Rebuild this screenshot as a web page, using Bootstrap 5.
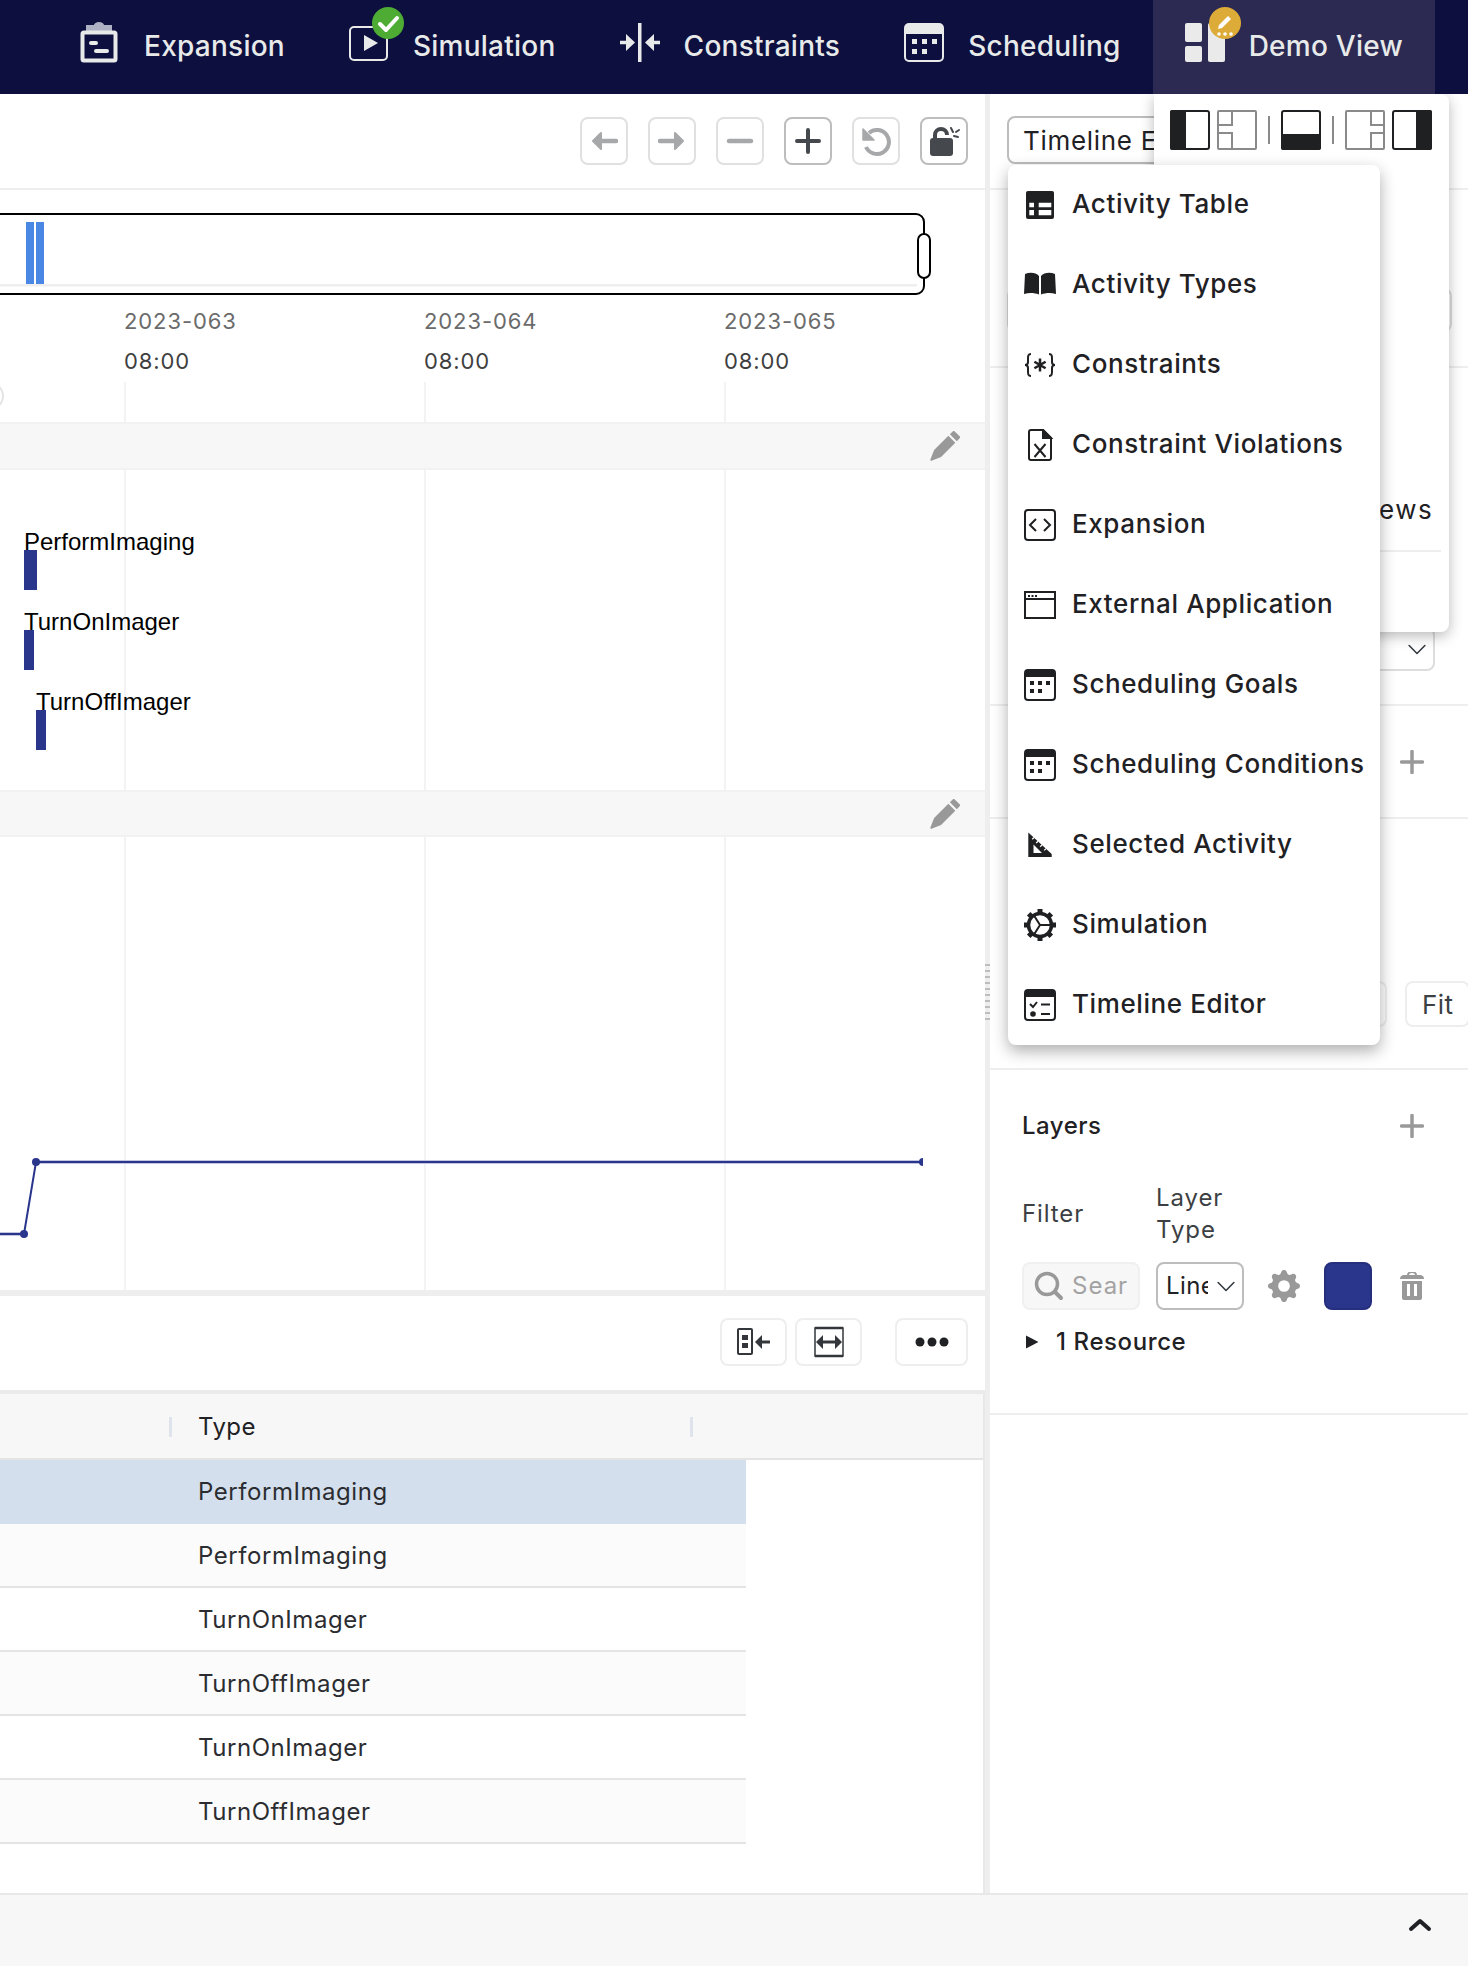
<!DOCTYPE html>
<html lang="en">
<head>
<meta charset="utf-8">
<title>Demo View</title>
<link rel="stylesheet" href="https://cdn.jsdelivr.net/npm/bootstrap@5.3.0/dist/css/bootstrap.min.css">
<style>
html,body{margin:0;height:1966px;overflow:hidden}
body{font-family:Inter,"Liberation Sans",sans-serif;font-size:26px;letter-spacing:.4px;color:#1f2124;display:flex;flex-direction:column;background:#fff}
svg{display:block;flex:none}
.app-nav{height:94px;background:#0d0f3f;padding:0 0 0 48px;flex:none;justify-content:flex-start;flex-wrap:nowrap}
.app-nav .nav-link{color:#e8eaea;font-size:28px;font-weight:500;letter-spacing:.25px;height:94px;padding:0 32px 2px 32px;display:flex;align-items:center;gap:24px}
.app-nav .nav-link svg{margin-bottom:6px}
.app-nav .nav-link.active,.app-nav .nav-link:hover{color:#e8eaea;background:#2c2a52}
.app-main{height:1799px;flex:none;position:relative;overflow:hidden}
.left-col{width:985px;flex:none;display:flex;flex-direction:column}
.splitter{width:5px;flex:none;background:#eee}
.grip{height:60px;margin-top:868px;background:radial-gradient(circle,#bdbdbd 1px,transparent 1.3px) 0 0/2.5px 6px}
.right-col{width:478px;flex:none;overflow:hidden}
.tool-row{height:96px;border-bottom:2px solid #eee;gap:20px;padding-right:17px}
.tool-btn{width:48px;height:48px;padding:0;border:2px solid #e0e0e0;border-radius:8px;background:#fff;display:flex;align-items:center;justify-content:center;flex:none}
.tool-btn.on{border-color:#bdbdbd}
.row-head{background:#f7f7f7;border-top:2px solid #f2f2f2;border-bottom:2px solid #f2f2f2;padding-right:25px;height:48px}
.row-head.second{height:47px}
.chart-axis{height:232px}
.chart-one{height:320px}
.chart-two{height:453px}
.chart-label{font-family:"Liberation Sans",Arial,sans-serif;font-size:24px;letter-spacing:0;fill:#000}
.chart-date{font-family:Inter,sans-serif;font-size:22px;letter-spacing:.9px;fill:#6b6b6b}
.chart-time{font-family:Inter,sans-serif;font-size:22px;letter-spacing:.9px;fill:#3f3f3f}
.thick{height:6px;background:#eee;flex:none}
.table-tools{height:98px;border-bottom:4px solid #ebebeb;padding:0 17px 2px 0;flex:none}
.table-btn{height:48px;padding:0;border:2px solid #eee;border-radius:8px;background:#fff;display:flex;align-items:center;justify-content:center}
.table-wrap{flex:1;border-right:2px solid #e8e8e8;overflow:hidden}
.grid-table{--bs-table-bg:transparent;width:983px;table-layout:fixed;margin:0;border-collapse:separate;border-spacing:0;font-size:24px;letter-spacing:.55px;color:#2b2d31}
.grid-table th{height:66px;background:#f7f7f7;font-weight:400;padding:2px 0 0 26px;vertical-align:middle;position:relative;border-bottom:2px solid #e4e4e4;border-top:0;color:#1f2124;letter-spacing:.4px}
.grid-table th.res::after{content:"";position:absolute;right:0;top:23px;height:20px;width:3px;background:#dfe3ec}
.grid-table td{height:64px;padding:2px 0 0 26px;vertical-align:middle;border-bottom:2px solid #e4e4e4}
.grid-table td.blank{border:0;background:#fff}
.grid-table tr.sel td:not(.blank){background:#d4dfed;border-bottom-color:#d4dfed}
.grid-table tr.alt td:not(.blank){background:#fbfbfb}
.sec{border-bottom:2px solid #eee}
.sec-a{height:96px;padding:0 0 2px 17px;display:flex;align-items:center}
.sec-b{height:178px;padding:98px 16px 0 17px}
.sec-c{height:338px;padding:259px 33px 0 32px}
.sec-d{height:113px;padding:0 44px 0 32px;display:flex;align-items:center;justify-content:flex-end}
.sec-e{height:251px;padding:162px 0 0 0;display:flex;justify-content:flex-end;gap:18px;margin-right:-2px}
.sec-f{height:345px;padding:36px 44px 0 32px}
.form-select.slim,.form-control.slim{border:2px solid #bdbdbd;border-radius:8px;font-size:26px;letter-spacing:.4px;color:#1f2124;box-shadow:none}
.form-select.slim{background-size:28px 21px;background-position:right 2px center;background-image:url("data:image/svg+xml,%3csvg xmlns='http://www.w3.org/2000/svg' viewBox='0 0 16 16'%3e%3cpath fill='none' stroke='%23343a40' stroke-linecap='round' stroke-linejoin='round' stroke-width='1.2' d='m2 5 6 6 6-6'/%3e%3c/svg%3e")}
.sel-a{width:400px;height:48px;padding:0 40px 0 14px;letter-spacing:.7px !important}
.sec-b .form-control.slim{height:44px;border-color:#ddd}
.sec-c .form-select.slim{height:44px;border-color:#ddd}
.mini-btn{height:46px;border:2px solid #eee;border-radius:8px;background:#fff;font-size:26px;letter-spacing:.4px;padding:0;color:#3c3f43}
.mini-a{width:200px}
.mini-b{width:65px;padding-left:15px;text-align:left}
.layers-title{height:40px;font-size:24px;font-weight:500;letter-spacing:.5px}
.field-labels{margin-top:35px;height:64px;padding-top:2px;font-size:24px;line-height:32px;letter-spacing:.9px;color:#3c3f43;gap:16px;align-items:center}
.col-filter{width:118px;flex:none}
.col-type{width:88px;flex:none}
.field-row{margin-top:17px;height:48px;align-items:center}
.search-box{width:118px;height:48px;flex:none;background:#f7f7f7;border:2px solid #f0f0f0;border-radius:8px;padding:0 6px 0 10px;gap:8px;align-items:center;overflow:hidden}
.search-box input{border:0;background:transparent;width:56px;min-width:0;padding:0;font-size:24px;letter-spacing:1px;outline:0;color:#999}
.search-box input::placeholder{color:#a3a3a3;opacity:1}
.type-select{width:88px;height:48px;flex:none;margin-left:16px;padding:0 34px 0 8px;font-size:24px !important}
.swatch{width:48px;height:48px;background:#2a358c;border:2px solid #262f7d;border-radius:8px;margin-left:24px;flex:none;padding:0}
.resource-row{margin-top:12px;height:40px;font-size:24px;font-weight:500;letter-spacing:.6px;gap:17px;padding-left:3px;align-items:center}
.popup{position:absolute;left:1154px;top:0;width:295px;height:538px;background:#fff;border-radius:0 8px 8px 8px;box-shadow:0 4px 14px rgba(0,0,0,.28);z-index:10;padding:16px 16px 0}
.popup-icons{height:40px;gap:7px;align-items:center}
.sep{width:2px;height:28px;background:#8a8a8a;margin:0 4px}
.popup-link{height:48px;margin-top:336px;text-align:right;font-size:26px;letter-spacing:1.4px;line-height:48px;white-space:nowrap}
.popup-hr{height:2px;background:#eee;margin:16px -8px 0 200px}
.menu{left:1008px;top:71px;width:372px;min-width:0;padding:0;border:0;border-radius:8px;box-shadow:0 6px 16px rgba(0,0,0,.32);z-index:20;--bs-dropdown-link-color:#1f2124;--bs-dropdown-link-hover-bg:#fff;--bs-dropdown-link-hover-color:#1f2124;--bs-dropdown-link-active-bg:#fff;--bs-dropdown-link-active-color:#1f2124}
.menu .dropdown-item{height:80px;padding:0 0 0 16px;gap:16px;font-size:26px;font-weight:500;letter-spacing:.6px;line-height:36px}
.menu .dropdown-item svg{margin-top:2px}
.menu .dropdown-item{padding-bottom:2px}
.app-foot{height:73px;flex:none;background:#f7f7f7;border-top:2px solid #e8e8e8;padding:0 36px 12px 0}
</style>
</head>
<body>
<nav class="navbar app-nav d-flex align-items-center">
  <a class="nav-link" href="#">
    <svg width="40" height="40" viewBox="0 0 40 40" overflow="visible"><path d="M6 2h8a5 3 0 0 1 10 0h8v6H6z" fill="#aeb0c4"/><rect x="2.5" y="9.5" width="33" height="28" rx="1.5" fill="none" stroke="#e8eaea" stroke-width="4"/><rect x="9" y="18" width="9" height="4" rx="2" fill="#e8eaea"/><rect x="14" y="26" width="15" height="4" rx="2" fill="#e8eaea"/></svg>
    Expansion</a>
  <a class="nav-link" href="#">
    <svg width="40" height="40" viewBox="0 0 40 40" overflow="visible"><rect x="1" y="4" width="37" height="33" rx="4" fill="none" stroke="#e8eaea" stroke-width="2"/><path d="M15 12l14 8-14 8z" fill="#e8eaea"/><circle cx="39" cy="0" r="16" fill="#4eac35"/><path d="M31 1l6 6 11-12" fill="none" stroke="#fff" stroke-width="4" stroke-linecap="round" stroke-linejoin="round"/></svg>
    Simulation</a>
  <a class="nav-link" href="#">
    <svg width="40" height="40" viewBox="0 0 40 40"><rect x="18" y="0" width="3.5" height="39" fill="#e8eaea"/><path d="M0 19.500h7M33 19.500h7" stroke="#e8eaea" stroke-width="3.5"/><path d="M6 11l9 8.500-9 8.500zM34 11l-9 8.500 9 8.500z" fill="#e8eaea"/></svg>
    Constraints</a>
  <a class="nav-link" href="#">
    <svg width="40" height="40" viewBox="0 0 40 40"><rect x="1" y="1" width="38" height="37" rx="4" fill="none" stroke="#e8eaea" stroke-width="2"/><path d="M1 11V4a3 3 0 0 1 3-3h32a3 3 0 0 1 3 3v7z" fill="#e8eaea"/><path d="M8 16h5v5H8zM18 16h5v5h-5zM28 16h5v5h-5zM8 26h5v5H8zM18 26h5v5h-5z" fill="#e8eaea"/></svg>
    Scheduling</a>
  <a class="nav-link active" href="#">
    <svg width="40" height="40" viewBox="0 0 40 40" overflow="visible"><rect x="0" y="0" width="17" height="19" rx="2" fill="#eaeaea"/><rect x="0" y="23" width="17" height="16" rx="2" fill="#eaeaea"/><rect x="23" y="0" width="17" height="39" rx="2" fill="#eaeaea"/><circle cx="40" cy="0" r="16" fill="#ddab37"/><path d="M33 6l1-4 9-9 3 3-9 9z" fill="#fff"/><circle cx="34" cy="11" r="1.800" fill="#fff"/><circle cx="40" cy="11" r="1.800" fill="#fff"/><circle cx="46" cy="11" r="1.800" fill="#fff"/></svg>
    Demo View</a>
</nav>

<main class="app-main d-flex">
  <section class="left-col">
    <div class="tool-row d-flex justify-content-end align-items-center flex-none">
      <button class="tool-btn" aria-label="Back"><svg width="28" height="28" viewBox="0 0 28 28"><path d="M26 14H9" stroke="#a6a8aa" stroke-width="4.500" stroke-linecap="round"/><path d="M11 6L3 14l8 8z" fill="#a6a8aa" stroke="#a6a8aa" stroke-width="2" stroke-linejoin="round"/></svg></button>
      <button class="tool-btn" aria-label="Forward"><svg width="28" height="28" viewBox="0 0 28 28"><path d="M2 14h17" stroke="#a6a8aa" stroke-width="4.500" stroke-linecap="round"/><path d="M17 6l8 8-8 8z" fill="#a6a8aa" stroke="#a6a8aa" stroke-width="2" stroke-linejoin="round"/></svg></button>
      <button class="tool-btn" aria-label="Zoom out"><svg width="28" height="28" viewBox="0 0 28 28"><path d="M3 14h22" stroke="#a6a8aa" stroke-width="4.500" stroke-linecap="round"/></svg></button>
      <button class="tool-btn on" aria-label="Zoom in"><svg width="28" height="28" viewBox="0 0 28 28"><path d="M3 14h22M14 3v22" stroke="#45494d" stroke-width="4" stroke-linecap="round"/></svg></button>
      <button class="tool-btn" aria-label="Reset"><svg width="32" height="32" viewBox="0 0 32 32"><path d="M9 8A12 12 0 1 1 6 22" fill="none" stroke="#a6a8aa" stroke-width="4"/><path d="M3 4v11h11z" fill="#a6a8aa" stroke="#a6a8aa" stroke-width="1.500" stroke-linejoin="round"/></svg></button>
      <button class="tool-btn on" aria-label="Lock"><svg width="34" height="34" viewBox="0 0 34 34"><path d="M8 15V11a6 6 0 0 1 12 0" fill="none" stroke="#45494d" stroke-width="4"/><rect x="3" y="14" width="23" height="18" rx="3" fill="#45494d"/><path d="M24 4l2 4M29 8l3-2M27 12l4 1" stroke="#45494d" stroke-width="2" stroke-linecap="round"/></svg></button>
    </div>

    <div class="chart-axis flex-none">
      <svg width="985" height="232" viewBox="0 190 985 232">
        <rect x="-20" y="214" width="944" height="80" rx="8" fill="#fff" stroke="#000" stroke-width="2"/>
        <rect x="0" y="284" width="917" height="2.500" fill="#eee"/>
        <rect x="26" y="222" width="8" height="62" fill="#4a86e4"/>
        <rect x="36" y="222" width="8" height="62" fill="#4a86e4"/>
        <rect x="918" y="234" width="12" height="44" rx="6" fill="#fff" stroke="#000" stroke-width="2"/>
        <text class="chart-date" x="124" y="329">2023-063</text>
        <text class="chart-date" x="424" y="329">2023-064</text>
        <text class="chart-date" x="724" y="329">2023-065</text>
        <text class="chart-time" x="124" y="369">08:00</text>
        <text class="chart-time" x="424" y="369">08:00</text>
        <text class="chart-time" x="724" y="369">08:00</text>
        <path d="M125 382v40M425 382v40M725 382v40" stroke="#f3f3f3" stroke-width="2"/>
        <circle cx="-10" cy="396" r="13" fill="#fff" stroke="#e4e4e4" stroke-width="2"/>
      </svg>
    </div>
    <div class="row-head d-flex justify-content-end align-items-center flex-none">
      <svg width="30" height="30" viewBox="0 0 16 16" fill="#999"><path d="M13.500 6.200 9.800 2.500 2.200 10.100.2 15.200a.5.5 0 0 0 .6.6l5.100-2zM10.600 1.700l3.700 3.700 1.500-1.500a.8.8 0 0 0 0-1.100l-2.600-2.600a.8.8 0 0 0-1.100 0z"/></svg>
    </div>
    <div class="chart-one flex-none">
      <svg width="985" height="320" viewBox="0 470 985 320">
        <path d="M125 470v320M425 470v320M725 470v320" stroke="#f3f3f3" stroke-width="2"/>
        <rect x="24" y="550" width="13" height="40" fill="#2a358c"/>
        <rect x="24" y="630" width="10" height="40" fill="#2a358c"/>
        <rect x="36" y="710" width="10" height="40" fill="#2a358c"/>
        <text class="chart-label" x="24" y="550">PerformImaging</text>
        <text class="chart-label" x="24" y="630">TurnOnImager</text>
        <text class="chart-label" x="36" y="710">TurnOffImager</text>
      </svg>
    </div>
    <div class="row-head second d-flex justify-content-end align-items-center flex-none">
      <svg width="30" height="30" viewBox="0 0 16 16" fill="#999"><path d="M13.500 6.200 9.800 2.500 2.200 10.100.2 15.200a.5.5 0 0 0 .6.6l5.100-2zM10.600 1.700l3.700 3.700 1.500-1.500a.8.8 0 0 0 0-1.100l-2.600-2.600a.8.8 0 0 0-1.100 0z"/></svg>
    </div>
    <div class="chart-two flex-none">
      <svg width="985" height="453" viewBox="0 837 985 453">
        <path d="M125 837v453M425 837v453M725 837v453" stroke="#f3f3f3" stroke-width="2"/>
        <path d="M0 1234H24M36 1162H923" fill="none" stroke="#c3c6e0" stroke-width="4"/>
        <path d="M0 1234H24L36 1162H923" fill="none" stroke="#2a358c" stroke-width="2"/>
        <circle cx="24" cy="1234" r="4" fill="#2a358c"/><circle cx="36" cy="1162" r="4" fill="#2a358c"/>
        <path d="M923 1158a4 4 0 0 0 0 8z" fill="#2a358c"/>
      </svg>
    </div>
    <div class="thick"></div>
    <div class="table-tools d-flex justify-content-end align-items-center">
      <button class="table-btn" style="width:67px" aria-label="Fit columns"><svg width="36" height="28" viewBox="0 0 36 28"><rect x="2" y="1" width="14" height="25" rx="1" fill="none" stroke="#33373b" stroke-width="2"/><rect x="6" y="7" width="6" height="5" fill="#33373b"/><rect x="6" y="15" width="6" height="5" fill="#33373b"/><path d="M24 14h10" stroke="#33373b" stroke-width="3"/><path d="M26 7l-7 7 7 7z" fill="#33373b"/></svg></button>
      <button class="table-btn ms-2" style="width:67px" aria-label="Size columns"><svg width="32" height="32" viewBox="0 0 32 32"><rect x="2" y="2" width="28" height="28" fill="none" stroke="#33373b" stroke-width="1.500"/><path d="M2 2h28M2 30h28" stroke="#33373b" stroke-width="2.500"/><path d="M9 16h14" stroke="#33373b" stroke-width="3"/><path d="M10 9l-7 7 7 7zM22 9l7 7-7 7z" fill="#33373b"/></svg></button>
      <button class="table-btn" style="width:73px;margin-left:33px" aria-label="More"><svg width="34" height="10" viewBox="0 0 34 10"><circle cx="5" cy="5" r="4.500" fill="#1f2124"/><circle cx="17" cy="5" r="4.500" fill="#1f2124"/><circle cx="29" cy="5" r="4.500" fill="#1f2124"/></svg></button>
    </div>
    <div class="table-wrap">
      <table class="table grid-table">
        <colgroup><col style="width:172px"><col style="width:521px"><col style="width:53px"><col style="width:237px"></colgroup>
        <thead><tr><th class="res"></th><th class="res">Type</th><th></th><th></th></tr></thead>
        <tbody>
          <tr class="sel"><td></td><td>PerformImaging</td><td></td><td class="blank"></td></tr>
          <tr class="alt"><td></td><td>PerformImaging</td><td></td><td class="blank"></td></tr>
          <tr><td></td><td>TurnOnImager</td><td></td><td class="blank"></td></tr>
          <tr class="alt"><td></td><td>TurnOffImager</td><td></td><td class="blank"></td></tr>
          <tr><td></td><td>TurnOnImager</td><td></td><td class="blank"></td></tr>
          <tr class="alt"><td></td><td>TurnOffImager</td><td></td><td class="blank"></td></tr>
        </tbody>
      </table>
    </div>
  </section>

  <div class="splitter"><div class="grip"></div></div>

  <aside class="right-col">
    <div class="sec sec-a"><select class="form-select slim sel-a" aria-label="View"><option>Timeline Editor</option></select></div>
    <div class="sec sec-b"><input class="form-control slim" aria-label="Timeline name"></div>
    <div class="sec sec-c"><select class="form-select slim" aria-label="Row"><option> </option></select></div>
    <div class="sec sec-d"><svg width="24" height="24" viewBox="0 0 24 24"><path d="M1.500 12h21M12 1.500v21" stroke="#999" stroke-width="3.500" stroke-linecap="round"/></svg></div>
    <div class="sec sec-e"><button class="mini-btn mini-a" aria-label="Reset"></button><button class="mini-btn mini-b">Fit</button></div>
    <div class="sec sec-f">
      <div class="layers-title d-flex justify-content-between align-items-center">Layers<svg width="24" height="24" viewBox="0 0 24 24"><path d="M1.500 12h21M12 1.500v21" stroke="#999" stroke-width="3.500" stroke-linecap="round"/></svg></div>
      <div class="field-labels d-flex"><div class="col-filter">Filter</div><div class="col-type">Layer Type</div></div>
      <div class="field-row d-flex">
        <div class="search-box d-flex"><svg class="flex-none" width="30" height="30" viewBox="0 0 30 30"><circle cx="13" cy="13" r="10.500" fill="none" stroke="#999" stroke-width="3.500"/><path d="M21 21l6 6" stroke="#999" stroke-width="4" stroke-linecap="round"/></svg><input placeholder="Search" aria-label="Filter"></div>
        <select class="form-select slim type-select" aria-label="Layer Type"><option>Line</option></select>
        <svg class="ms-4" width="32" height="32" viewBox="0 0 16 16" fill="#999"><path d="M9.405 1.050c-.413-1.400-2.397-1.400-2.810 0l-.1.340a1.464 1.464 0 0 1-2.105.872l-.31-.17c-1.283-.698-2.686.705-1.987 1.987l.169.311c.446.820.023 1.841-.872 2.105l-.34.1c-1.400.413-1.400 2.397 0 2.810l.34.1a1.464 1.464 0 0 1 .872 2.105l-.17.310c-.698 1.283.705 2.686 1.987 1.987l.311-.169a1.464 1.464 0 0 1 2.105.872l.1.340c.413 1.400 2.397 1.400 2.810 0l.1-.34a1.464 1.464 0 0 1 2.105-.872l.31.170c1.283.698 2.686-.705 1.987-1.987l-.169-.311a1.464 1.464 0 0 1 .872-2.105l.34-.1c1.400-.413 1.400-2.397 0-2.810l-.34-.1a1.464 1.464 0 0 1-.872-2.105l.17-.31c.698-1.283-.705-2.686-1.987-1.987l-.311.169a1.464 1.464 0 0 1-2.105-.872l-.1-.34zM8 10.930a2.929 2.929 0 1 1 0-5.858 2.929 2.929 0 0 1 0 5.858z"/></svg>
        <button class="swatch" aria-label="Layer colour"></button>
        <svg style="margin-left:28px" width="24" height="28" viewBox="0 0 24 28"><path d="M8 3a4 3 0 0 1 8 0" fill="none" stroke="#999" stroke-width="2"/><path d="M0 7c0-3 2-4 4-4h16c2 0 4 1 4 4z" fill="#999"/><path fill-rule="evenodd" d="M2 9h20v17a2 2 0 0 1-2 2H4a2 2 0 0 1-2-2zM7 12v12h3V12zM14 12v12h3V12z" fill="#999"/></svg>
      </div>
      <div class="resource-row d-flex"><svg width="14" height="14" viewBox="0 0 14 14"><path d="M1 .5l12.500 6.500L1 13.500z" fill="#1f2124"/></svg>1 Resource</div>
    </div>
  </aside>

  <div class="popup">
    <div class="popup-icons d-flex">
      <svg width="40" height="40" viewBox="0 0 40 40"><rect x="1" y="1" width="38" height="38" rx="2" fill="#fff" stroke="#1f2022" stroke-width="2"/><rect x="0" y="0" width="16" height="40" rx="2" fill="#1f2022"/></svg>
      <svg width="40" height="40" viewBox="0 0 40 40" fill="none" stroke="#8a8a8a" stroke-width="2"><rect x="1" y="1" width="38" height="38" rx="1"/><path d="M15 1v14H1M15 39V23H1"/></svg>
      <span class="sep"></span>
      <svg width="40" height="40" viewBox="0 0 40 40"><rect x="1" y="1" width="38" height="38" rx="2" fill="#fff" stroke="#1f2022" stroke-width="2"/><rect x="0" y="24" width="40" height="16" rx="2" fill="#1f2022"/></svg>
      <span class="sep"></span>
      <svg width="40" height="40" viewBox="0 0 40 40" fill="none" stroke="#8a8a8a" stroke-width="2"><rect x="1" y="1" width="38" height="38" rx="1"/><path d="M26 1v14h13M26 39V23h13"/></svg>
      <svg width="40" height="40" viewBox="0 0 40 40"><rect x="1" y="1" width="38" height="38" rx="2" fill="#fff" stroke="#1f2022" stroke-width="2"/><rect x="24" y="0" width="16" height="40" rx="2" fill="#1f2022"/></svg>
    </div>
    <div class="popup-link">ews</div>
    <div class="popup-hr"></div>
  </div>

  <ul class="dropdown-menu show menu">
    <li><a class="dropdown-item d-flex align-items-center" href="#"><svg width="32" height="32" viewBox="0 0 32 32"><rect x="2" y="2" width="28" height="28" rx="2" fill="#1f2022"/><path d="M5.300 13.700H10v4.600H5.300zM14.700 13.700h12.600v4.600H14.700zM5.300 21H10v5.300H5.300zM14.700 21h12.600v5.300H14.700z" fill="#fff"/></svg>Activity Table</a></li>
    <li><a class="dropdown-item d-flex align-items-center" href="#"><svg width="32" height="32" viewBox="0 0 32 32"><path d="M15 7C12 3.500 6 3 1 5L0 25c5-1.500 10-1.500 15 .5zM17 7c3-3.500 9-4 14-2l1 20c-5-1.500-10-1.500-15 .5z" fill="#1f2022"/></svg>Activity Types</a></li>
    <li><a class="dropdown-item d-flex align-items-center" href="#"><svg width="32" height="32" viewBox="0 0 32 32" fill="none" stroke="#1f2022" stroke-width="2"><path d="M7 5C4 5 4 7 4 10v3c0 2-1 3-3 3 2 0 3 1 3 3v3c0 3 0 5 3 5M25 5c3 0 3 2 3 5v3c0 2 1 3 3 3-2 0-3 1-3 3v3c0 3 0 5-3 5"/><path d="M16 9.500v13M10.400 12.750l11.200 6.500M21.600 12.750l-11.200 6.500" stroke-width="2.500"/></svg>Constraints</a></li>
    <li><a class="dropdown-item d-flex align-items-center" href="#"><svg width="32" height="32" viewBox="0 0 32 32" fill="none" stroke="#1f2022" stroke-width="2"><path d="M7 1h12l8 8v20a2 2 0 0 1-2 2H7a2 2 0 0 1-2-2V3a2 2 0 0 1 2-2z"/><path d="M19 1v8h8z" fill="#1f2022"/><path d="M10.500 15l11 13M21.500 15l-11 13"/></svg>Constraint Violations</a></li>
    <li><a class="dropdown-item d-flex align-items-center" href="#"><svg width="32" height="32" viewBox="0 0 32 32" fill="none" stroke="#1f2022" stroke-width="2"><rect x="1" y="1" width="30" height="30" rx="3"/><path d="M12 10l-6 6 6 6M20 10l6 6-6 6"/></svg>Expansion</a></li>
    <li><a class="dropdown-item d-flex align-items-center" href="#"><svg width="32" height="32" viewBox="0 0 32 32"><rect x="1" y="3" width="30" height="26" fill="none" stroke="#1f2022" stroke-width="2"/><path d="M1 10h30" stroke="#1f2022" stroke-width="2"/><path d="M4 6h2v2H4zM7.500 6h2v2h-2zM11 6h2v2h-2z" fill="#1f2022"/></svg>External Application</a></li>
    <li><a class="dropdown-item d-flex align-items-center" href="#"><svg width="32" height="32" viewBox="0 0 32 32"><rect x="1" y="1" width="30" height="30" rx="3" fill="none" stroke="#1f2022" stroke-width="2"/><path d="M1 8V4a3 3 0 0 1 3-3h24a3 3 0 0 1 3 3v4z" fill="#1f2022"/><path d="M6 12h4v4H6zM14 12h4v4h-4zM22 12h4v4h-4zM6 20h4v4H6zM14 20h4v4h-4z" fill="#1f2022"/></svg>Scheduling Goals</a></li>
    <li><a class="dropdown-item d-flex align-items-center" href="#"><svg width="32" height="32" viewBox="0 0 32 32"><rect x="1" y="1" width="30" height="30" rx="3" fill="none" stroke="#1f2022" stroke-width="2"/><path d="M1 8V4a3 3 0 0 1 3-3h24a3 3 0 0 1 3 3v4z" fill="#1f2022"/><path d="M6 12h4v4H6zM14 12h4v4h-4zM22 12h4v4h-4zM6 20h4v4H6zM14 20h4v4h-4z" fill="#1f2022"/></svg>Scheduling Conditions</a></li>
    <li><a class="dropdown-item d-flex align-items-center" href="#"><svg width="32" height="32" viewBox="0 0 32 32"><path fill-rule="evenodd" d="M4.300 3.500L27.700 25v3H4.300zM9.500 15.500v8.500H18z" fill="#1f2022"/><path d="M10 8.500l-1.800 1.800M14 12.200l-1.800 1.800M18 15.900l-1.800 1.800M22 19.600l-1.800 1.800" stroke="#fff" stroke-width="1.300"/></svg>Selected Activity</a></li>
    <li><a class="dropdown-item d-flex align-items-center" href="#"><svg width="32" height="32" viewBox="0 0 32 32"><circle cx="16" cy="16" r="11.500" fill="none" stroke="#1f2022" stroke-width="3.500"/><g fill="#1f2022"><rect x="13.500" y="0" width="5" height="5"/><rect x="13.500" y="27" width="5" height="5"/><rect x="0" y="13.500" width="5" height="5"/><rect x="27" y="13.500" width="5" height="5"/><g transform="rotate(45 16 16)"><rect x="13.500" y="0" width="5" height="5"/><rect x="13.500" y="27" width="5" height="5"/><rect x="0" y="13.500" width="5" height="5"/><rect x="27" y="13.500" width="5" height="5"/></g></g><path d="M16 16H27M16 16L10 6.500M16 16L10 25.500" stroke="#1f2022" stroke-width="2" fill="none"/></svg>Simulation</a></li>
    <li><a class="dropdown-item d-flex align-items-center" href="#"><svg width="32" height="32" viewBox="0 0 32 32"><rect x="1" y="1" width="30" height="30" rx="3" fill="none" stroke="#1f2022" stroke-width="2"/><path d="M1 8V4a3 3 0 0 1 3-3h24a3 3 0 0 1 3 3v4z" fill="#1f2022"/><path d="M6 15l3 3 4-5M17 15.500h9M17 25h9" fill="none" stroke="#1f2022" stroke-width="2"/><circle cx="9" cy="25" r="2.800" fill="#1f2022"/></svg>Timeline Editor</a></li>
  </ul>
</main>

<footer class="app-foot d-flex justify-content-end align-items-center">
  <svg width="24" height="16" viewBox="0 0 24 16"><path d="M3 12l9-8 9 8" fill="none" stroke="#1f2124" stroke-width="4" stroke-linecap="round" stroke-linejoin="round"/></svg>
</footer>
<script src="https://cdn.jsdelivr.net/npm/bootstrap@5.3.0/dist/js/bootstrap.bundle.min.js"></script>
</body>
</html>
